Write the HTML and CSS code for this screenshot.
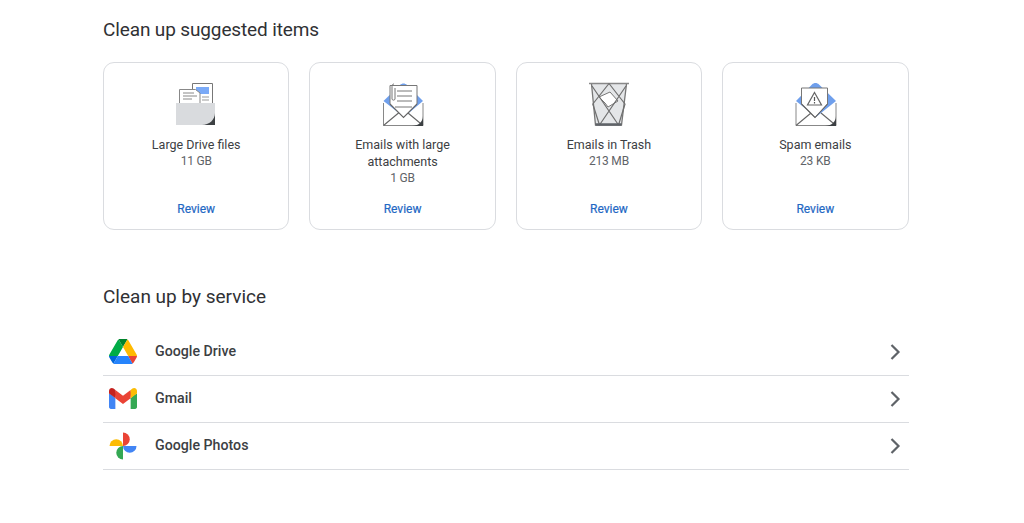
FILE: index.html
```html
<!DOCTYPE html>
<html lang="en">
<head>
<meta charset="utf-8">
<title>Clean up</title>
<link rel="stylesheet" href="styles.css">
</head>
<body>
<main class="page">
  <h2 class="heading heading-suggested">Clean up suggested items</h2>
  <section class="cards">
    <article class="card">
      <svg class="art" viewBox="0 0 48 48">
        <path d="M20.500 3.500h20v24h-20z" fill="#fff" stroke="#777" stroke-width="1"/>
        <path d="M24 7h13v7H24z" fill="#7baaf7"/>
        <path d="M30 17h7M30 20h7" stroke="#999" stroke-width="1"/>
        <path d="M7.500 9.500h16l4.500 3.500v12H7.500z" fill="#fff" stroke="#888" stroke-width="1"/>
        <path d="M11 13h11M11 16h14M11 19h9" stroke="#888" stroke-width="1"/>
        <path d="M4 23h39v22H4z" fill="#d9dbde"/>
        <path d="M43 33v12H30c7 0 13-5 13-12z" fill="#3c4043"/>
      </svg>
      <h3 class="title">Large Drive files</h3>
      <p class="value">11 GB</p>
      <a class="review">Review</a>
    </article>
    <article class="card">
      <svg class="art" viewBox="0 0 48 48">
        <path d="M4.500 21L21 5c2-2 5-2 7 0l16 16-19 16z" fill="#6f9fec"/>
        <path d="M11 5.500h27v18.500L24.500 37.500 11 24z" fill="#fff" stroke="#777" stroke-width="1"/>
        <path d="M15 4c-1.500 0-2 1-2 2.500V19c0 1.500 3 1.500 3 0V8" fill="none" stroke="#777" stroke-width="1"/>
        <path d="M18 11h15M18 16h15M18 21h15M16 27h17" stroke="#777" stroke-width="1"/>
        <path d="M4.500 23v22.500h39.500V23" fill="none" stroke="#888" stroke-width="1"/>
        <path d="M4.500 45.500l15-12.500M44 45.500L29 33M11 24l13.500 13.500L38 24" fill="none" stroke="#666" stroke-width="1.100"/>
        <path d="M44 36v10H33c6 0 11-4 11-10z" fill="#3c4043"/>
      </svg>
      <h3 class="title">Emails with large attachments</h3>
      <p class="value">1 GB</p>
      <a class="review">Review</a>
    </article>
    <article class="card">
      <svg class="art" viewBox="0 0 48 48">
        <path d="M6.500 4h35l-5 41h-26z" fill="#e4e6e8"/>
        <path d="M14 17l11-5 8 9-10 6-3-4z" fill="#fff" stroke="#777" stroke-width="1"/>
        <path d="M4 3.500h40" stroke="#888" stroke-width="1.300"/>
        <path d="M6.500 4l4 41h26l5-41" fill="none" stroke="#777" stroke-width="1.300"/>
        <path d="M24 3.500L7.800 24l6.700 21M24 3.500L40 24l-6.500 21M7 6l26.500 39M41 6L14.500 45" fill="none" stroke="#6f6f6f" stroke-width="1.200"/>
        <path d="M10.500 44.500h26" stroke="#5f6368" stroke-width="2.500"/>
      </svg>
      <h3 class="title">Emails in Trash</h3>
      <p class="value">213 MB</p>
      <a class="review">Review</a>
    </article>
    <article class="card">
      <svg class="art" viewBox="0 0 48 48">
        <path d="M5 21L21 4.500c2-2 5-2 7 0L45 21 25 37z" fill="#6f9fec"/>
        <path d="M10.500 8h26v16L24 37.500 10.500 24z" fill="#fff" stroke="#777" stroke-width="1"/>
        <path d="M23.500 12.500L30.500 25h-14z" fill="none" stroke="#666" stroke-width="1.200"/>
        <path d="M23.500 17v4M23.500 22v1.500" stroke="#555" stroke-width="1.200"/>
        <path d="M5 23v22.500h40V23" fill="none" stroke="#888" stroke-width="1"/>
        <path d="M5 45.500l15-12.500M45 45.500L30 33M10.500 24L24 37.500 36.500 24" fill="none" stroke="#666" stroke-width="1.100"/>
        <path d="M45 36v10H34c6 0 11-4 11-10z" fill="#3c4043"/>
      </svg>
      <h3 class="title">Spam emails</h3>
      <p class="value">23 KB</p>
      <a class="review">Review</a>
    </article>
  </section>
  <h2 class="heading heading-service">Clean up by service</h2>
  <ul class="services">
    <li class="service">
      <span class="logo-box">
        <svg class="logo" viewBox="0 0 87.300 78">
          <path d="m6.600 66.850 3.850 6.650c.8 1.400 1.950 2.500 3.300 3.300l13.750-23.800h-27.500c0 1.550.4 3.100 1.200 4.500z" fill="#0066da"/>
          <path d="m43.650 25-13.750-23.800c-1.350.8-2.500 1.900-3.300 3.300l-25.400 44a9.060 9.060 0 0 0 -1.200 4.500h27.500z" fill="#00ac47"/>
          <path d="m73.550 76.800c1.350-.8 2.500-1.900 3.300-3.300l1.600-2.750 7.650-13.250c.8-1.400 1.200-2.950 1.200-4.500h-27.502l5.852 11.500z" fill="#ea4335"/>
          <path d="m43.650 25 13.750-23.800c-1.350-.8-2.900-1.200-4.500-1.200h-18.500c-1.600 0-3.150.45-4.500 1.200z" fill="#00832d"/>
          <path d="m59.800 53h-32.300l-13.750 23.800c1.350.8 2.900 1.200 4.500 1.200h50.800c1.600 0 3.150-.45 4.500-1.200z" fill="#2684fc"/>
          <path d="m73.400 26.500-12.700-22c-.8-1.400-1.950-2.500-3.300-3.300l-13.750 23.800 16.150 28h27.450c0-1.550-.4-3.100-1.200-4.500z" fill="#ffba00"/>
        </svg>
      </span>
      <span class="name">Google Drive</span>
      <svg class="chev" viewBox="0 0 24 24"><path d="M8.500 5L15.500 12l-7 7" fill="none" stroke="#5f6368" stroke-width="2.200"/></svg>
    </li>
    <li class="service">
      <span class="logo-box">
        <svg class="logo" viewBox="0 0 256 193">
          <path fill="#4285f4" d="M58.182 192.050V93.140L27.507 65.077 0 49.504v125.091c0 9.658 7.825 17.455 17.455 17.455h40.727Z"/>
          <path fill="#34a853" d="M197.818 192.050h40.727c9.659 0 17.455-7.826 17.455-17.455V49.505l-31.156 17.837-27.026 25.798v98.910Z"/>
          <path fill="#ea4335" d="m58.182 93.140-4.174-38.647 4.174-36.989L128 69.868l69.818-52.364 4.669 34.992-4.669 40.644L128 145.504z"/>
          <path fill="#fbbc04" d="M197.818 17.504V93.140L256 49.504V26.231c0-21.585-24.640-33.890-41.890-20.945l-16.292 12.218Z"/>
          <path fill="#c5221f" d="m0 49.504 26.759 20.070L58.182 93.140V17.504L41.890 5.286C24.610-7.660 0 4.646 0 26.230v23.273Z"/>
        </svg>
      </span>
      <span class="name">Gmail</span>
      <svg class="chev" viewBox="0 0 24 24"><path d="M8.500 5L15.500 12l-7 7" fill="none" stroke="#5f6368" stroke-width="2.200"/></svg>
    </li>
    <li class="service">
      <span class="logo-box">
        <svg class="logo" viewBox="0 0 28 28">
          <path d="M.5 14a6.750 6.750 0 0 1 13.500 0z" fill="#fbbc04"/>
          <path d="M14 .5a6.750 6.750 0 0 1 0 13.500z" fill="#ea4335"/>
          <path d="M27.500 14a6.750 6.750 0 0 1-13.500 0z" fill="#4285f4"/>
          <path d="M14 27.500a6.750 6.750 0 0 1 0-13.500z" fill="#34a853"/>
        </svg>
      </span>
      <span class="name">Google Photos</span>
      <svg class="chev" viewBox="0 0 24 24"><path d="M8.500 5L15.500 12l-7 7" fill="none" stroke="#5f6368" stroke-width="2.200"/></svg>
    </li>
  </ul>
</main>
</body>
</html>
```
FILE: styles.css
```css
* { box-sizing: border-box; }
html, body { margin: 0; padding: 0; background: #fff; }
body { font-family: Roboto, "Noto Sans", sans-serif; color: #3c4043; }
.page { width: 806px; margin-left: 103px; padding-top: 18px; }
.heading { margin: 0; font-size: 19px; line-height: 24px; font-weight: 400; color: #303134; }
.heading-suggested { letter-spacing: -0.13px; }
.cards { display: grid; grid-template-columns: repeat(4, 1fr); gap: 20px; width: 805.500px; margin-top: 20px; }
.card { height: 168px; border: 1px solid #dadce0; border-radius: 11px; display: flex; flex-direction: column; align-items: center; padding: 17px 30px 0; text-align: center; }
.art { width: 48px; height: 48px; flex: none; }
.title { margin: 8px 0 0; font-size: 12.500px; line-height: 17px; font-weight: 400; color: #3c4043; }
.value { margin: 0; font-size: 12px; line-height: 17px; letter-spacing: -0.2px; color: #5f6368; }
.review { margin-top: auto; margin-bottom: 12px; font-size: 12px; line-height: 16px; font-weight: 400; -webkit-text-stroke: 0.2px #1f68c4; color: #1f68c4; }
.heading-service { margin-top: 55px; }
.services { list-style: none; margin: 20px 0 0; padding: 0; }
.service { height: 47px; display: flex; align-items: center; border-bottom: 1px solid #dadce0; padding: 0 2px 0 6px; }
.logo-box { width: 28px; height: 28px; flex: none; display: flex; align-items: center; justify-content: center; }
.logo { width: 28px; display: block; }
.name { margin: -2px 0 0 18px; flex: 1; font-size: 14.200px; font-weight: 500; color: #3c4043; }
.chev { width: 24px; height: 24px; flex: none; }
```
